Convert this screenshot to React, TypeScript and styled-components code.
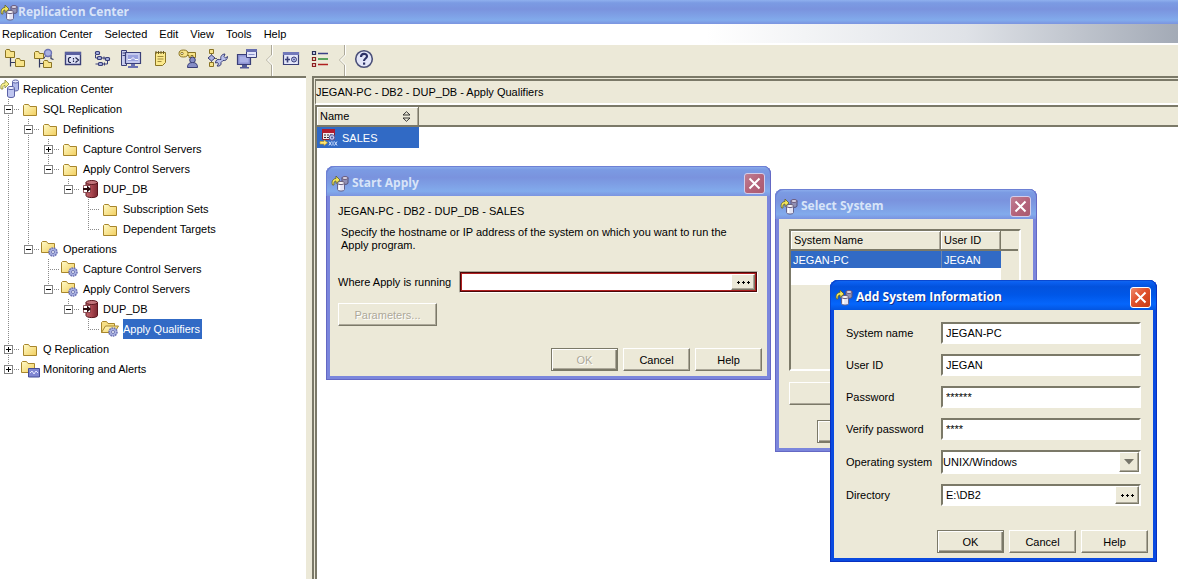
import React from "react";
import styled, { createGlobalStyle, css } from "styled-components";

const face = "#ece9d8";
const dark = "#7b7968";
const mid = "#aca899";
const select = "#316ac5";

const Global = createGlobalStyle`
  * { box-sizing: border-box; }
  body {
    margin: 0;
    background: #fff;
    color: #000;
    font: 11px/14px "Liberation Sans", Arial, sans-serif;
  }
  button, input, select { font: inherit; color: inherit; }
`;

const raised = css`
  border: 1px solid;
  border-color: #fff ${dark} ${dark} #fff;
  box-shadow: inset -1px -1px 0 ${mid};
`;

const sunken = css`
  border: 2px solid;
  border-color: ${dark} #fff #fff ${dark};
`;

/* ---------- application frame ---------- */

const Desktop = styled.div`
  position: relative;
  display: flex;
  flex-direction: column;
  min-height: 100vh;
  padding-right: 1px;
  overflow: hidden;
`;

const inactiveTitle = "linear-gradient(#8fb0ee 0, #7b9be3 12%, #7a93de 38%, #7e9fe5 62%, #82abec 84%, #7b94e0 100%)";
const activeTitle = "linear-gradient(#1a6dea 0, #0a5ff0 8%, #0352dd 22%, #0057e8 50%, #0566fc 80%, #0355e0 100%)";

const AppTitle = styled.header`
  display: flex;
  align-items: center;
  height: 24px;
  background: ${inactiveTitle};
`;

const TitleText = styled.h1<{ $active?: boolean }>`
  flex: 1;
  margin: 0;
  font: bold 12px/16px "Open Sans", "Noto Sans", sans-serif;
  color: ${(p) => (p.$active ? "#fff" : "#d8e4f8")};
  text-shadow: ${(p) => (p.$active ? "1px 1px 0 #0a2f90" : "none")};
  white-space: nowrap;
`;

const MenuBar = styled.nav`
  display: flex;
  align-items: center;
  gap: 12px;
  height: 21px;
  padding-left: 2px;
  border-bottom: 2px solid #fff;
  background: linear-gradient(90deg, #fff 60%, #dfe2e7 82%, #a3aab6 100%);
`;

const MenuItem = styled.button`
  padding: 0;
  border: 0;
  background: none;
  white-space: nowrap;
`;

const Toolbar = styled.div`
  display: flex;
  align-items: center;
  height: 31px;
  background: ${face};
`;

const ToolButton = styled.button`
  display: flex;
  justify-content: center;
  width: 29px;
  padding: 0 0 4px;
  border: 0;
  background: none;
`;

const Separator = styled.svg`
  flex: none;
  width: 15px;
  height: 31px;
`;

const Main = styled.main`
  display: flex;
  flex: 1;
  gap: 6px;
  background: ${face};
`;

const TreePane = styled.aside`
  width: 306px;
  padding-top: 1px;
  border-top: 2px solid ${dark};
  background: #fff;
`;

const DetailPane = styled.section`
  display: flex;
  flex: 1;
  flex-direction: column;
  padding: 1px 0 0 1px;
  border: solid ${dark};
  border-width: 2px 0 0 2px;
`;

const PathBar = styled.div`
  height: 26px;
  line-height: 23px;
  border: solid ${dark};
  border-width: 2px 0 0 1px;
  border-bottom: 2px solid #fff;
`;

const DetailBody = styled.div`
  flex: 1;
  border: solid ${dark};
  border-width: 2px 0 0 2px;
  background: #fff;
`;

/* ---------- tree ---------- */

const Tree = styled.ul`
  margin: 0;
  padding: 0;
  list-style: none;
`;

const TreeRow = styled.li`
  display: flex;
  align-items: center;
  height: 20px;
`;

const dotsV = "repeating-linear-gradient(#8a8a8a 0 1px, transparent 1px 2px)";
const dotsH = "repeating-linear-gradient(90deg, #8a8a8a 0 1px, transparent 1px 2px)";

const Guide = styled.span<{ $kind: string }>`
  display: flex;
  align-items: center;
  flex: none;
  width: 20px;
  height: 20px;
  padding-left: 4px;
  background-repeat: no-repeat;
  background-image: ${(p) => (p.$kind === " " ? "none" : p.$kind === "|" ? dotsV : `${dotsV}, ${dotsH}`)};
  background-position: 8px 0, 8px 10px;
  background-size: 1px ${(p) => (p.$kind === "L" ? "10px" : "20px")}, 12px 1px;
`;

const Expander = styled.button<{ $open: boolean }>`
  width: 9px;
  height: 9px;
  padding: 0;
  border: 1px solid #848484;
  background:
    linear-gradient(#000, #000) center / 5px 1px no-repeat,
    linear-gradient(#000, #000) center / 1px ${(p) => (p.$open ? "0" : "5px")} no-repeat,
    #fff;
`;

const IconSlot = styled.span`
  display: flex;
  flex: none;
  width: 23px;
`;

const NodeLabel = styled.span<{ $selected?: boolean }>`
  padding: 3px 2px 3px 0;
  white-space: nowrap;
  color: ${(p) => (p.$selected ? "#fff" : "#000")};
  background: ${(p) => (p.$selected ? select : "transparent")};
`;

/* ---------- tables ---------- */

const Grid = styled.table`
  width: 100%;
  border-collapse: separate;
  border-spacing: 0;
  table-layout: fixed;
`;

const HeadCell = styled.th<{ $blank?: boolean }>`
  height: 20px;
  padding: 0 7px 0 3px;
  font-weight: normal;
  text-align: left;
  background: ${face};
  border-bottom: 2px solid ${dark};
  ${(p) => !p.$blank && css`
    border-right: 1px solid ${dark};
    box-shadow: inset 1px 1px 0 #fff, inset -1px 0 0 ${mid};
  `}
`;

const HeadFlex = styled.div`
  display: flex;
  align-items: center;
  justify-content: space-between;
`;

const Cell = styled.td<{ $selected?: boolean; $split?: boolean }>`
  height: 17px;
  padding: 0 2px;
  color: #fff;
  background: ${(p) => (p.$selected ? select : "#fff")};
  ${(p) => p.$split && css`border-left: 1px solid #6f87b0;`}
`;

const RowLabel = styled.div`
  display: flex;
  align-items: center;
  gap: 3px;
  height: 21px;
`;

/* ---------- dialog windows ---------- */

const Frame = styled.section<{ $active?: boolean; $x: number; $y: number; $w: number }>`
  position: absolute;
  left: ${(p) => p.$x}px;
  top: ${(p) => p.$y}px;
  width: ${(p) => p.$w}px;
  padding: 0 4px 4px;
  border-radius: 8px 8px 0 0;
  background: ${(p) => (p.$active ? "#0a4ae0" : "#7b86dc")};
  box-shadow: inset 0 0 0 1px ${(p) => (p.$active ? "#0831c0" : "#6468c4")};
`;

const FrameTitle = styled.header<{ $active?: boolean }>`
  display: flex;
  align-items: center;
  gap: 3px;
  height: 30px;
  margin: 0 -4px;
  padding: 4px 6px 0 5px;
  border-radius: 8px 8px 0 0;
  background: ${(p) => (p.$active ? activeTitle : inactiveTitle)};
  box-shadow: inset 1px 1px 0 ${(p) => (p.$active ? "#0a48d0" : "#6d80d4")}, inset -1px 0 0 ${(p) => (p.$active ? "#0831c0" : "#6468c4")};
`;

const CloseButton = styled.button<{ $active?: boolean }>`
  display: flex;
  align-items: center;
  justify-content: center;
  width: 21px;
  height: 21px;
  padding: 0;
  border: 1px solid ${(p) => (p.$active ? "#fff" : "#d3cdea")};
  border-radius: 3px;
  background: ${(p) => (p.$active ? "linear-gradient(135deg, #ee8a6c, #e0512c 45%, #c63a12)" : "linear-gradient(135deg, #bf7f93, #b5647b 50%, #a95a70)")};
`;

const FrameBody = styled.div<{ $pad: string }>`
  display: flex;
  flex-direction: column;
  padding: ${(p) => p.$pad};
  background: ${face};
`;

const Button = styled.button<{ $default?: boolean; $wide?: boolean }>`
  width: ${(p) => (p.$wide ? "99px" : "67px")};
  height: 23px;
  padding: 0;
  background: ${face};
  ${raised}
  ${(p) => p.$default && css`
    border-color: ${dark};
    box-shadow: inset 1px 1px 0 #fff, inset -1px -1px 0 ${dark}, inset -2px -2px 0 ${mid};
  `}
  &:disabled {
    color: ${mid};
    text-shadow: 1px 1px 0 #fff;
  }
`;

const Buttons = styled.div`
  display: flex;
  justify-content: flex-end;
  gap: 5px;
`;

const Line = styled.p<{ $indent?: boolean }>`
  margin: 0 0 8px;
  padding-left: ${(p) => (p.$indent ? "3px" : "0")};
  line-height: 13px;
`;

const FormRow = styled.div<{ $label: number }>`
  display: grid;
  grid-template-columns: ${(p) => p.$label}px 1fr;
  align-items: center;
`;

const Fields = styled.div<{ $before?: number; $after: number; $right?: number }>`
  display: flex;
  flex-direction: column;
  gap: 10px;
  margin: ${(p) => p.$before ?? 0}px ${(p) => p.$right ?? 7}px ${(p) => p.$after}px 0;
`;

const FieldBox = styled.div<{ $error?: boolean; $tall?: boolean }>`
  display: flex;
  height: ${(p) => (p.$tall ? "24px" : "22px")};
  background: #fff;
  ${sunken}
  ${(p) => p.$error && css`
    border: 1px solid;
    border-color: ${mid} #fff #fff ${mid};
    box-shadow: inset 0 0 0 1px #4a0808, inset 0 0 0 2px #b02020;
    padding: 2px;
  `}
`;

const TextInput = styled.input`
  flex: 1;
  min-width: 0;
  padding: 0 3px;
  border: 0;
  outline: 0;
  background: transparent;
`;

const SelectInput = styled.select`
  flex: 1;
  min-width: 0;
  padding: 0;
  border: 0;
  outline: 0;
  appearance: none;
  background: transparent;
`;

const FieldButton = styled.button<{ $small?: boolean }>`
  display: flex;
  align-items: center;
  justify-content: center;
  width: ${(p) => (p.$small ? "20px" : "24px")};
  padding: 0;
  background: ${face};
  ${raised}
`;

const TableBox = styled.div`
  height: 142px;
  margin: 0 7px 11px 0;
  border: 2px solid;
  border-color: ${dark} #fff #fff ${dark};
  padding-right: 1px;
`;

/* ---------- drawings ---------- */

const navy = "#3a3f78";
const lilac = "#a9b1e2";
const gold = "#f7e38a";
const brown = "#8a7424";

const AppIcon = () => (
  <svg width="18" height="18" viewBox="0 0 18 18" aria-hidden="true">
    <path d="M11 3.500v5.500a3 1.400 0 0 0 6 0v-5.500" fill="#8f8fb4" stroke="#55557c" />
    <ellipse cx="14" cy="4" rx="3" ry="1.500" fill="#dcd8e8" stroke="#6a5a7c" />
    <path d="M6.500 9v6.500a3.500 1.600 0 0 0 7 0V9" fill="#e4e4f4" stroke="#62628c" />
    <path d="M8.500 10.500v5.500" stroke="#fff" strokeWidth="1.500" />
    <ellipse cx="10" cy="9" rx="3.500" ry="1.600" fill="#f4f2f6" stroke="#6a5f7c" />
    <path d="M1.500 11C0 7 2.500 4.500 5 4.500V2l4 4-4 3.500V7C3.500 7 2.500 8 3 11z" fill="#f4e65a" stroke="#5f6128" strokeWidth=".8" />
  </svg>
);

const RootArt = () => (
  <>
    <path d="M12.500 3v7.500a3 1.500 0 0 0 6 0V3" fill="#b3bbea" stroke="#5b62a6" />
    <ellipse cx="15.500" cy="2.500" rx="3" ry="1.500" fill="#e8ebff" stroke="#5b62a6" />
    <path d="M7.500 9v8a3.500 1.600 0 0 0 7 0V9" fill="#bfc6f0" stroke="#5b62a6" />
    <ellipse cx="11" cy="9" rx="3.500" ry="1.600" fill="#eef0ff" stroke="#5b62a6" />
    <path d="M1 10C0 6 2 4 5 4V1l4 4-4 4V6.500C3 6.500 2.500 8 3 10z" fill="#f6ef8a" stroke="#87863a" strokeWidth=".8" />
  </>
);

const DefsHolder = styled.div`
  height: 0;
  overflow: hidden;
`;

const Defs = () => (
  <svg width="0" height="0" aria-hidden="true">
    <defs>
      <linearGradient id="folderFill" x1="0" y1="0" x2="1" y2="1">
        <stop offset="0" stopColor="#fffbc8" />
        <stop offset="1" stopColor="#f2ce5e" />
      </linearGradient>
      <linearGradient id="dbFill" x1="0" x2="1">
        <stop offset="0" stopColor="#c46a70" />
        <stop offset=".5" stopColor="#a8454e" />
        <stop offset="1" stopColor="#7d2a33" />
      </linearGradient>
    </defs>
  </svg>
);

const Gear = ({ x, y }: { x: number; y: number }) => (
  <g>
    <circle cx={x} cy={y} r="4" fill="#aab2e4" stroke="#6d74b6" strokeWidth="1.600" strokeDasharray="1.600 .8" />
    <circle cx={x} cy={y} r="1.500" fill="#f4f5ff" stroke="#5a61a0" strokeWidth=".8" />
  </g>
);

const PlainFolder = () => (
  <path d="M3.500 16.500v-10l1-1h4l1.500 2h6.500v9z" fill="url(#folderFill)" stroke="#a8862c" strokeLinejoin="round" />
);
const SmallFolder = () => (
  <path d="M1.500 13.500v-10l1-1h4l1.500 2h6.500v9z" fill="url(#folderFill)" stroke="#a8862c" strokeLinejoin="round" />
);

const NodeIcon = ({ kind }: { kind: string }) => (
  <svg width="20" height="20" viewBox="0 0 20 20" aria-hidden="true">
    {kind === "folder" && <PlainFolder />}
    {kind === "gear" && (<><SmallFolder /><Gear x={13} y={13} /></>)}
    {kind === "open" && (
      <>
        <path d="M1.500 13.500v-10l1-1h4l1.500 2h6.500v3" fill="#f6df86" stroke="#a8862c" />
        <path d="M1.500 13.500l4-6.500h13l-4 6.500z" fill="url(#folderFill)" stroke="#a8862c" strokeLinejoin="round" />
        <Gear x={13} y={13} />
      </>
    )}
    {kind === "monitor" && (
      <>
        <SmallFolder />
        <path d="M8.500 9.500h11v8.500h-11z" fill="#7f86d2" stroke="#454c96" />
        <path d="M10 14l2-2 2 3 2-3 2 2" fill="none" stroke="#e4e7ff" />
      </>
    )}
    {kind === "db" && (
      <>
        <path d="M6 3.500v13a5.500 2 0 0 0 11.500 0v-13" fill="url(#dbFill)" stroke="#5a161e" />
        <ellipse cx="11.750" cy="3.500" rx="5.750" ry="2" fill="#c3757b" stroke="#5a161e" />
        <path d="M3.500 6.500h7v7h-7z" fill="#fff" stroke="#7c3038" strokeWidth=".8" />
        <path d="M3 9h4V6.500l4 3.500-4 3.500V11H3z" fill="#2a0a0e" />
      </>
    )}
    {kind === "root" && <RootArt />}
  </svg>
);

const JobIcon = () => (
  <svg width="20" height="20" viewBox="0 0 20 20" aria-hidden="true">
    <path d="M3.500 2.500h12v9h-12z" fill="#f4e8ec" stroke="#8b1f2d" />
    <path d="M3 1h13v4H3z" fill="#b01c30" />
    <path d="M5 7h2m1 0h2m1 0h2M5 9.500h2m1 0h2" stroke="#2b2b2b" />
    <circle cx="13" cy="9.500" r="2.800" fill="#c4c9f0" stroke="#555b9c" />
    <circle cx="13" cy="9.500" r=".9" fill="#444a88" />
    <path d="M1 13.500h4V12l3.500 2.750L5 17.500V16H1z" fill="#ffe878" stroke="#c79a18" strokeWidth=".6" />
    <path d="M10 13.500l2.500 4m0-4l-2.500 4m4-4v4m1.500-4l2.500 4m0-4l-2.500 4" stroke="#cfe0ff" />
  </svg>
);

const SortIcon = () => (
  <svg width="9" height="11" viewBox="0 0 9 11" aria-hidden="true">
    <path d="M1 4L4.500 .7 8 4zM1 7l3.500 3.300L8 7z" fill="none" stroke="#222" strokeWidth=".9" />
  </svg>
);

const Dots = () => (
  <svg width="13" height="3" viewBox="0 0 13 3" aria-hidden="true">
    <path d="M0 1.500h3M5 1.500h3M10 1.500h3M1.500 0v3M6.500 0v3M11.500 0v3" stroke="#000" />
  </svg>
);

const DownArrow = () => (
  <svg width="10" height="6" viewBox="0 0 10 6" aria-hidden="true">
    <path d="M0 0h10L5 5.500z" fill="#77756a" />
  </svg>
);

const Cross = () => (
  <svg width="13" height="13" viewBox="0 0 13 13" aria-hidden="true">
    <path d="M1.500 1.500l10 10M11.500 1.500l-10 10" stroke="#fff" strokeWidth="2" />
  </svg>
);

const fold = (x: number, y: number, w = 9, h = 8) => (
  <path
    d={`M${x} ${y + h}v${-h + 1}l1-1h3l1 2h${w - 5}v${h - 2}z`}
    fill={gold}
    stroke={brown}
    strokeLinejoin="round"
  />
);

const toolArt: Record<string, React.ReactNode> = {
  tree: (
    <>
      <path d="M6.500 9v9.500M6.500 14.500h6" stroke="#333a60" fill="none" strokeWidth="1.200" />
      {fold(1.5, 1.5)}
      {fold(11.5, 10.5, 9, 8)}
    </>
  ),
  find: (
    <>
      <path d="M6.500 10v9.500M6.500 15.500h5M18 7v3.500l2.500 1" stroke="#333a60" fill="none" strokeWidth="1.200" />
      {fold(1.5, 3.5, 9, 7)}
      {fold(10.5, 12.5, 8, 7)}
      <path d="M12.500 8l-2 3" stroke={navy} />
      <circle cx="15" cy="5" r="3.500" fill={lilac} stroke="#6b72b4" strokeWidth="1.400" />
    </>
  ),
  terminal: (
    <>
      <path d="M3.500 4.500h15v12h-15z" fill="#dfe2f7" stroke={navy} strokeWidth="1.400" />
      <path d="M3 4h16v3H3z" fill="#5a60a0" />
      <path d="M9 9.500H7.500L6.500 10.500v3l1 1H9M11.500 10v1.500M11.500 12.500v1.500M13.500 9.500l3 2.500-3 2.500" fill="none" stroke="#20264e" strokeWidth="1.200" />
    </>
  ),
  flow: (
    <>
      <rect x="4.500" y="3.500" width="4" height="3" rx="1" fill={lilac} stroke={navy} strokeWidth="1.200" />
      <rect x="6.500" y="8.500" width="4" height="3" rx="1" fill={lilac} stroke={navy} strokeWidth="1.200" />
      <rect x="14.500" y="9.500" width="4" height="3" rx="1" fill={lilac} stroke={navy} strokeWidth="1.200" />
      <rect x="7.500" y="14.500" width="4" height="3" rx="1" fill={lilac} stroke={navy} strokeWidth="1.200" />
      <path d="M4.500 7v3h2M10.500 10h4M13 8.500v3M16.500 12.500V16h-5M13.500 14.500v3M7.500 16H4.500" fill="none" stroke={navy} />
    </>
  ),
  monitor: (
    <>
      <path d="M1.500 2.500h5v15h-5z" fill="#c9cdec" stroke={navy} />
      <path d="M2.500 5h3M2.500 7.500h3" stroke={navy} />
      <path d="M5.500 4.500h15v11h-15z" fill="#c4c9ee" stroke={navy} strokeWidth="1.200" />
      <path d="M8 7h10v6H8z" fill="#9aa2de" />
      <path d="M8 11.500h3l2-2 2 2h3" fill="none" stroke="#fff" />
      <path d="M11 16h4v2h3v2H8v-2h3z" fill="#6a71b2" />
    </>
  ),
  note: (
    <>
      <path d="M6.500 4.500h10v10l-3 3h-7z" fill="#fbe98c" stroke={brown} />
      <path d="M7 3v3M9.500 3v3M12 3v3M14.500 3v3" stroke="#6a5c28" />
      <path d="M8.500 8.500h6M8.500 11h6M8.500 13.500h4" stroke="#a28c3c" />
    </>
  ),
  key: (
    <>
      <path d="M8 4.500h9.500v5h-2.500v-2h-2v2h-2v-2H8z" fill={gold} stroke={brown} />
      <ellipse cx="5.500" cy="5.500" rx="4.500" ry="3.500" fill={gold} stroke={brown} />
      <circle cx="4" cy="5.500" r="1.200" fill="#fff" stroke={brown} />
      <circle cx="14.500" cy="12" r="2.800" fill="#868dc6" stroke={navy} />
      <path d="M9.500 19.500c0-3.500 1.500-5 5-5s5 1.500 5 5z" fill="#868dc6" stroke={navy} />
    </>
  ),
  wrench: (
    <>
      <path d="M4.500 5v14M5 10.500h5" stroke="#6b6b55" />
      <path d="M2.500 1.500h4v4h-4zM2.500 14.500h4v4h-4z" fill={gold} stroke={brown} />
      <path d="M4.500 7l3.500 3-3.500 3-3.500-3z" fill={lilac} stroke={navy} />
      <path d="M14 11.500c-1-3 1-5.500 4-5.500l-1 2.500 1.500 1.500 2-1.500c0 3-2 4.500-4.500 4l-2 2c.5 2.500-1 4-4 3.500l1.500-2-1-1.500-2 .5c0-3 2-4 4-3.500z" fill="#b9c0ea" stroke={navy} />
    </>
  ),
  screens: (
    <>
      <path d="M1.500 6.500h13v10h-13z" fill="#8d94d2" stroke={navy} strokeWidth="1.200" />
      <path d="M3.500 8.500h9v6h-9z" fill="#aab1e6" />
      <path d="M6 17h5v2h2v1.500H4V19h2z" fill="#525a98" />
      <path d="M10.500 1.500h10v8h-10z" fill="#e2e5fa" stroke={navy} />
      <path d="M10 1h11v3H10z" fill="#666db0" />
      <path d="M12.500 6.500h6" stroke="#8990c8" />
    </>
  ),
  settings: (
    <>
      <path d="M3.500 4.500h15v12h-15z" fill="#e5e8fa" stroke={navy} strokeWidth="1.200" />
      <path d="M3 4h16v3H3z" fill="#7279ba" />
      <path d="M5 11.500h5M7.500 8.500v6" stroke={navy} strokeWidth="1.600" />
      <circle cx="14" cy="11.500" r="2.500" fill="#b4bbea" stroke={navy} />
      <circle cx="14" cy="11.500" r=".8" fill={navy} />
    </>
  ),
  list: (
    <>
      <path d="M3.500 3.500h3v3h-3z" fill="#cdd2f2" stroke="#2a2f56" strokeWidth="1.200" />
      <path d="M3.500 9.500h3v3h-3z" fill="#d8f0d0" stroke="#8a2020" strokeWidth="1.200" />
      <path d="M3.500 15.500h3v3h-3z" fill="#f2cdcd" stroke="#8a2020" strokeWidth="1.200" />
      <path d="M9 5.500h10" stroke="#3a3f86" strokeWidth="1.500" />
      <path d="M9 11h10" stroke="#2b8a34" strokeWidth="1.500" />
      <path d="M9 16.500h10" stroke="#b02020" strokeWidth="1.500" />
    </>
  ),
  help: (
    <>
      <circle cx="11" cy="11" r="8.300" fill="#e3e6f8" stroke="#4b5079" strokeWidth="1.600" />
      <path d="M8 9c0-4 6-4 6-.8 0 2.300-3 2.300-3 4.800" fill="none" stroke="#2c3166" strokeWidth="2.200" />
      <path d="M10 14.500h2.200v2.200h-2.200z" fill="#2c3166" />
    </>
  ),
};

const Tool = ({ name, label }: { name: string; label: string }) => (
  <ToolButton type="button" aria-label={label}>
    <svg width="22" height="22" viewBox="0 0 22 22">{toolArt[name]}</svg>
  </ToolButton>
);

const Notch = () => (
  <Separator viewBox="0 0 15 31" aria-hidden="true">
    <path d="M10.500 0v10l-5 5 5 5v11" fill="none" stroke={mid} />
    <path d="M11.500 0v10l-5 5 5 5v11" fill="none" stroke="#fff" />
  </Separator>
);

/* ---------- content ---------- */

// guides: "|" passes through, "T" branches, "L" ends a branch, " " is empty
const nodes: { guides: string; icon: string; label: string; open?: boolean; selected?: boolean }[] = [
  { guides: "", icon: "root", label: "Replication Center" },
  { guides: "T", icon: "folder", label: "SQL Replication", open: true },
  { guides: "|T", icon: "folder", label: "Definitions", open: true },
  { guides: "||T", icon: "folder", label: "Capture Control Servers", open: false },
  { guides: "||L", icon: "folder", label: "Apply Control Servers", open: true },
  { guides: "|| L", icon: "db", label: "DUP_DB", open: true },
  { guides: "||  T", icon: "folder", label: "Subscription Sets" },
  { guides: "||  L", icon: "folder", label: "Dependent Targets" },
  { guides: "|L", icon: "gear", label: "Operations", open: true },
  { guides: "| T", icon: "gear", label: "Capture Control Servers" },
  { guides: "| L", icon: "gear", label: "Apply Control Servers", open: true },
  { guides: "|  L", icon: "db", label: "DUP_DB", open: true },
  { guides: "|   L", icon: "open", label: "Apply Qualifiers", selected: true },
  { guides: "T", icon: "folder", label: "Q Replication", open: false },
  { guides: "L", icon: "monitor", label: "Monitoring and Alerts", open: false },
];

const menus = ["Replication Center", "Selected", "Edit", "View", "Tools", "Help"];

const Dialog = (props: {
  title: string; active?: boolean; x: number; y: number; w: number; pad: string; children: React.ReactNode;
}) => (
  <Frame $active={props.active} $x={props.x} $y={props.y} $w={props.w} role="dialog" aria-label={props.title}>
    <FrameTitle $active={props.active}>
      <AppIcon />
      <TitleText as="h2" $active={props.active}>{props.title}</TitleText>
      <CloseButton type="button" aria-label="Close" $active={props.active}><Cross /></CloseButton>
    </FrameTitle>
    <FrameBody $pad={props.pad}>{props.children}</FrameBody>
  </Frame>
);

const TextRow = ({ id, label, value, browse }: { id: string; label: string; value: string; browse?: boolean }) => (
  <FormRow $label={95}>
    <label htmlFor={id}>{label}</label>
    <FieldBox>
      <TextInput id={id} defaultValue={value} />
      {browse && <FieldButton type="button" aria-label="Browse"><Dots /></FieldButton>}
    </FieldBox>
  </FormRow>
);

export default function App() {
  return (
    <Desktop>
      <Global />
      <DefsHolder><Defs /></DefsHolder>
      <AppTitle>
        <AppIcon />
        <TitleText>Replication Center</TitleText>
      </AppTitle>
      <MenuBar>
        {menus.map((m) => <MenuItem key={m} type="button">{m}</MenuItem>)}
      </MenuBar>
      <Toolbar>
        <Tool name="tree" label="Object tree" />
        <Tool name="find" label="Find" />
        <Tool name="terminal" label="Command line" />
        <Tool name="flow" label="Tasks" />
        <Tool name="monitor" label="Health" />
        <Tool name="note" label="Journal" />
        <Tool name="key" label="License" />
        <Tool name="wrench" label="Configure" />
        <Tool name="screens" label="Information" />
        <Notch />
        <Tool name="settings" label="Settings" />
        <Tool name="list" label="Legend" />
        <Notch />
        <Tool name="help" label="Help" />
      </Toolbar>
      <Main>
        <TreePane>
          <Tree>
            {nodes.map((n, i) => (
              <TreeRow key={i}>
                {n.guides.split("").map((g, j) => (
                  <Guide key={j} $kind={g}>
                    {j === n.guides.length - 1 && n.open !== undefined && (
                      <Expander type="button" $open={n.open} aria-label={n.open ? "Collapse" : "Expand"} />
                    )}
                  </Guide>
                ))}
                <IconSlot><NodeIcon kind={n.icon} /></IconSlot>
                <NodeLabel $selected={n.selected}>{n.label}</NodeLabel>
              </TreeRow>
            ))}
          </Tree>
        </TreePane>
        <DetailPane>
          <PathBar>JEGAN-PC - DB2 - DUP_DB - Apply Qualifiers</PathBar>
          <DetailBody>
            <Grid>
              <colgroup><col width="102" /><col /></colgroup>
              <thead>
                <tr>
                  <HeadCell><HeadFlex>Name<SortIcon /></HeadFlex></HeadCell>
                  <HeadCell $blank />
                </tr>
              </thead>
              <tbody>
                <tr>
                  <Cell $selected><RowLabel><JobIcon />SALES</RowLabel></Cell>
                  <Cell />
                </tr>
              </tbody>
            </Grid>
          </DetailBody>
        </DetailPane>
      </Main>

      <Dialog title="Start Apply" x={326} y={166} w={445} pad="9px 5px 5px 8px">
        <Line>JEGAN-PC - DB2 - DUP_DB - SALES</Line>
        <Line $indent>
          Specify the hostname or IP address of the system on which you want to run the
          <br />
          Apply program.
        </Line>
        <Fields $before={11} $after={22} $right={4}>
          <FormRow $label={121}>
            <label htmlFor="where">Where Apply is running</label>
            <FieldBox $error>
              <TextInput id="where" />
              <FieldButton type="button" aria-label="Browse"><Dots /></FieldButton>
            </FieldBox>
          </FormRow>
          <Button type="button" $wide disabled>Parameters...</Button>
        </Fields>
        <Buttons>
          <Button type="button" $default disabled>OK</Button>
          <Button type="button">Cancel</Button>
          <Button type="button">Help</Button>
        </Buttons>
      </Dialog>

      <Dialog title="Select System" x={775} y={189} w={262} pad="10px 5px 5px 10px">
        <TableBox>
          <Grid>
            <colgroup><col width="150" /><col width="60" /><col /></colgroup>
            <thead>
              <tr>
                <HeadCell>System Name</HeadCell>
                <HeadCell>User ID</HeadCell>
                <HeadCell $blank />
              </tr>
            </thead>
            <tbody>
              <tr>
                <Cell $selected>JEGAN-PC</Cell>
                <Cell $selected $split>JEGAN</Cell>
              </tr>
              <tr><Cell /><Cell /></tr>
            </tbody>
          </Grid>
        </TableBox>
        <Fields $after={15}>
          <Button type="button" $wide aria-label="Add" />
        </Fields>
        <Buttons>
          <Button type="button" $default aria-label="OK" />
          <Button type="button" aria-label="Cancel" />
          <Button type="button" aria-label="Help" />
        </Buttons>
      </Dialog>

      <Dialog title="Add System Information" active x={830} y={280} w={327} pad="12px 5px 5px 12px">
        <Fields $after={24}>
          <TextRow id="sys" label="System name" value="JEGAN-PC" />
          <TextRow id="user" label="User ID" value="JEGAN" />
          <TextRow id="pass" label="Password" value="******" />
          <TextRow id="verify" label="Verify password" value="****" />
          <FormRow $label={95}>
            <label htmlFor="os">Operating system</label>
            <FieldBox $tall>
              <SelectInput id="os" defaultValue="u"><option value="u">UNIX/Windows</option></SelectInput>
              <FieldButton as="span" $small><DownArrow /></FieldButton>
            </FieldBox>
          </FormRow>
          <TextRow id="dir" label="Directory" value="E:\DB2" browse />
        </Fields>
        <Buttons>
          <Button type="button" $default>OK</Button>
          <Button type="button">Cancel</Button>
          <Button type="button">Help</Button>
        </Buttons>
      </Dialog>
    </Desktop>
  );
}
